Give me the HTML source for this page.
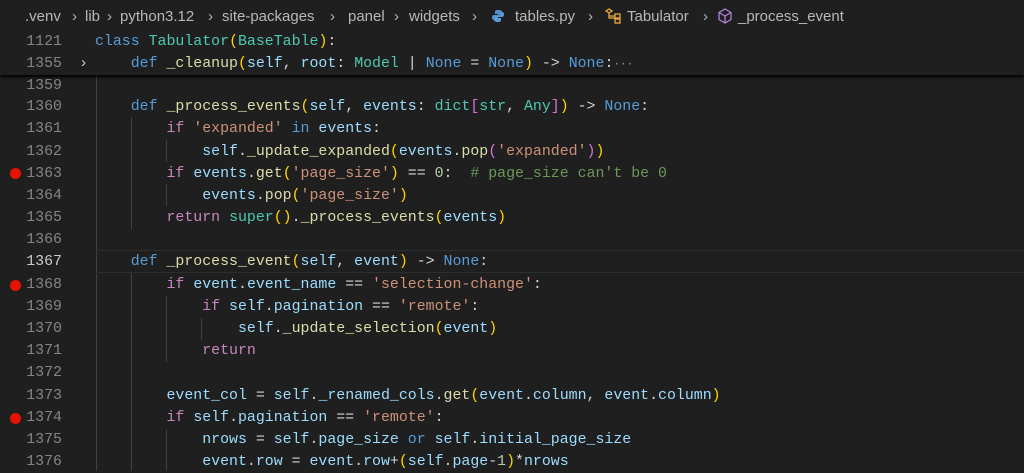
<!DOCTYPE html>
<html><head><meta charset="utf-8"><style>
body{margin:0;width:1024px;height:471px;background:#1f1f1f;overflow:hidden;position:relative;font-family:"Liberation Mono",monospace;}
.bc{position:absolute;top:0;left:0;width:1024px;height:31px;background:#1f1f1f;font-family:"Liberation Sans",sans-serif;font-size:15px;color:#b8b8b8;line-height:34px;white-space:nowrap;}
.bc span{position:absolute;top:0}
.l{position:absolute;left:0;width:1024px;height:22px;line-height:22px;font-size:14.9px;white-space:pre;color:#d4d4d4}
.n{position:absolute;left:0;width:62px;text-align:right;color:#858585}
.c{position:absolute;left:95px}
.k{color:#569cd6}.p{color:#c586c0}.f{color:#dcdcaa}.v{color:#9cdcfe}.t{color:#4ec9b0}.s{color:#ce9178}.cm{color:#6a9955}.num{color:#b5cea8}.y{color:#ffd700}.m{color:#da70d6}.w{color:#d4d4d4}
.g{position:absolute;width:1px;background:#404040}
.bp{position:absolute;left:10px;width:11px;height:11px;border-radius:50%;background:#e51400}
</style></head><body>
<div class="bc">
<span style="left:25px">.venv</span><span style="left:72px">›</span>
<span style="left:85px">lib</span><span style="left:107px">›</span>
<span style="left:120px">python3.12</span><span style="left:208px">›</span>
<span style="left:222px">site-packages</span><span style="left:330px">›</span>
<span style="left:348px">panel</span><span style="left:394px">›</span>
<span style="left:409px">widgets</span><span style="left:472px">›</span>
<span style="left:515px">tables.py</span><span style="left:588px">›</span>
<span style="left:627px">Tabulator</span><span style="left:703px">›</span>
<span style="left:738px">_process_event</span>
<svg style="position:absolute;left:491px;top:9px" width="14" height="14" viewBox="0 0 14 14"><path d="M7 1c-3 0-3 1-3 2v2h3v1H3C1 6 1 8 1 9s1 2 2 2h1V9c0-1 1-2 2-2h3c1 0 2-1 2-2V3c0-1-1-2-4-2z" fill="#4f8fcf"/><path d="M7 13c3 0 3-1 3-2V9H7V8h4c2 0 2-2 2-3s-1-2-2-2h-1v2c0 1-1 2-2 2H5c-1 0-2 1-2 2v2c0 1 1 2 4 2z" fill="#5d9bd8"/></svg>
<svg style="position:absolute;left:605px;top:8px" width="17" height="16" viewBox="0 0 17 16" fill="none" stroke="#e8a93a" stroke-width="1.3"><path d="M1 3l3-2 3 2-3 2z"/><path d="M4 5v5h6M4 8h6"/><rect x="10" y="6" width="5" height="4"/><rect x="10" y="11" width="5" height="4"/></svg>
<svg style="position:absolute;left:717px;top:8px" width="16" height="16" viewBox="0 0 16 16" fill="none" stroke="#b180d7" stroke-width="1.3"><path d="M8 1l6 3.5v7L8 15l-6-3.5v-7z"/><path d="M2 4.5L8 8l6-3.5M8 8v7"/></svg>
</div>
<div style="position:absolute;left:0;top:30px;width:1024px;height:45px;background:#1f1f1f;box-shadow:0 2px 3px #000;z-index:2"></div>
<div class="g" style="left:96px;top:75px;height:396px"></div>
<div class="g" style="left:131px;top:117px;height:112px"></div>
<div class="g" style="left:166px;top:140px;height:22px"></div>
<div class="g" style="left:166px;top:184px;height:22px"></div>
<div class="g" style="left:131px;top:273px;height:198px"></div>
<div class="g" style="left:166px;top:296px;height:66px"></div>
<div class="g" style="left:201px;top:318px;height:22px"></div>
<div class="g" style="left:166px;top:429px;height:42px"></div>
<div style="position:absolute;left:96px;top:250px;width:928px;height:23px;border-top:1px solid #2d2d2d;border-bottom:1px solid #2d2d2d;box-sizing:border-box"></div>

<div class="l" style="top:31px;z-index:3"><span class="n">1121</span><span class="c"><span class="k">class</span> <span class="t">Tabulator</span><span class="y">(</span><span class="t">BaseTable</span><span class="y">)</span>:</span></div>
<div class="l" style="top:53px;z-index:3"><span class="n">1355</span><span style="position:absolute;left:79px;color:#ccc">›</span><span class="c">    <span class="k">def</span> <span class="f">_cleanup</span><span class="y">(</span><span class="v">self</span>, <span class="v">root</span>: <span class="t">Model</span> | <span class="k">None</span> = <span class="k">None</span><span class="y">)</span> -&gt; <span class="k">None</span>:<span style="color:#999;font-size:11px">···</span></span></div>
<div class="l" style="top:75px"><span class="n">1359</span></div>
<div class="l" style="top:96px"><span class="n">1360</span><span class="c">    <span class="k">def</span> <span class="f">_process_events</span><span class="y">(</span><span class="v">self</span>, <span class="v">events</span>: <span class="t">dict</span><span class="m">[</span><span class="t">str</span>, <span class="t">Any</span><span class="m">]</span><span class="y">)</span> -&gt; <span class="k">None</span>:</span></div>
<div class="l" style="top:118px"><span class="n">1361</span><span class="c">        <span class="p">if</span> <span class="s">'expanded'</span> <span class="k">in</span> <span class="v">events</span>:</span></div>
<div class="l" style="top:141px"><span class="n">1362</span><span class="c">            <span class="v">self</span>.<span class="f">_update_expanded</span><span class="y">(</span><span class="v">events</span>.<span class="f">pop</span><span class="m">(</span><span class="s">'expanded'</span><span class="m">)</span><span class="y">)</span></span></div>
<div class="bp" style="top:168px"></div>
<div class="l" style="top:163px"><span class="n">1363</span><span class="c">        <span class="p">if</span> <span class="v">events</span>.<span class="f">get</span><span class="y">(</span><span class="s">'page_size'</span><span class="y">)</span> == <span class="num">0</span>:  <span class="cm"># page_size can't be 0</span></span></div>
<div class="l" style="top:185px"><span class="n">1364</span><span class="c">            <span class="v">events</span>.<span class="f">pop</span><span class="y">(</span><span class="s">'page_size'</span><span class="y">)</span></span></div>
<div class="l" style="top:207px"><span class="n">1365</span><span class="c">        <span class="p">return</span> <span class="t">super</span><span class="y">()</span>.<span class="f">_process_events</span><span class="y">(</span><span class="v">events</span><span class="y">)</span></span></div>
<div class="l" style="top:229px"><span class="n">1366</span></div>
<div class="l" style="top:251px"><span class="n" style="color:#ccc">1367</span><span class="c">    <span class="k">def</span> <span class="f">_process_event</span><span class="y">(</span><span class="v">self</span>, <span class="v">event</span><span class="y">)</span> -&gt; <span class="k">None</span>:</span></div>
<div class="bp" style="top:280px"></div>
<div class="l" style="top:274px"><span class="n">1368</span><span class="c">        <span class="p">if</span> <span class="v">event</span>.<span class="v">event_name</span> == <span class="s">'selection-change'</span>:</span></div>
<div class="l" style="top:296px"><span class="n">1369</span><span class="c">            <span class="p">if</span> <span class="v">self</span>.<span class="v">pagination</span> == <span class="s">'remote'</span>:</span></div>
<div class="l" style="top:318px"><span class="n">1370</span><span class="c">                <span class="v">self</span>.<span class="f">_update_selection</span><span class="y">(</span><span class="v">event</span><span class="y">)</span></span></div>
<div class="l" style="top:340px"><span class="n">1371</span><span class="c">            <span class="p">return</span></span></div>
<div class="l" style="top:362px"><span class="n">1372</span></div>
<div class="l" style="top:385px"><span class="n">1373</span><span class="c">        <span class="v">event_col</span> = <span class="v">self</span>.<span class="v">_renamed_cols</span>.<span class="f">get</span><span class="y">(</span><span class="v">event</span>.<span class="v">column</span>, <span class="v">event</span>.<span class="v">column</span><span class="y">)</span></span></div>
<div class="bp" style="top:413px"></div>
<div class="l" style="top:407px"><span class="n">1374</span><span class="c">        <span class="p">if</span> <span class="v">self</span>.<span class="v">pagination</span> == <span class="s">'remote'</span>:</span></div>
<div class="l" style="top:429px"><span class="n">1375</span><span class="c">            <span class="v">nrows</span> = <span class="v">self</span>.<span class="v">page_size</span> <span class="k">or</span> <span class="v">self</span>.<span class="v">initial_page_size</span></span></div>
<div class="l" style="top:451px"><span class="n">1376</span><span class="c">            <span class="v">event</span>.<span class="v">row</span> = <span class="v">event</span>.<span class="v">row</span>+<span class="y">(</span><span class="v">self</span>.<span class="v">page</span>-<span class="num">1</span><span class="y">)</span>*<span class="v">nrows</span></span></div>
</body></html>
